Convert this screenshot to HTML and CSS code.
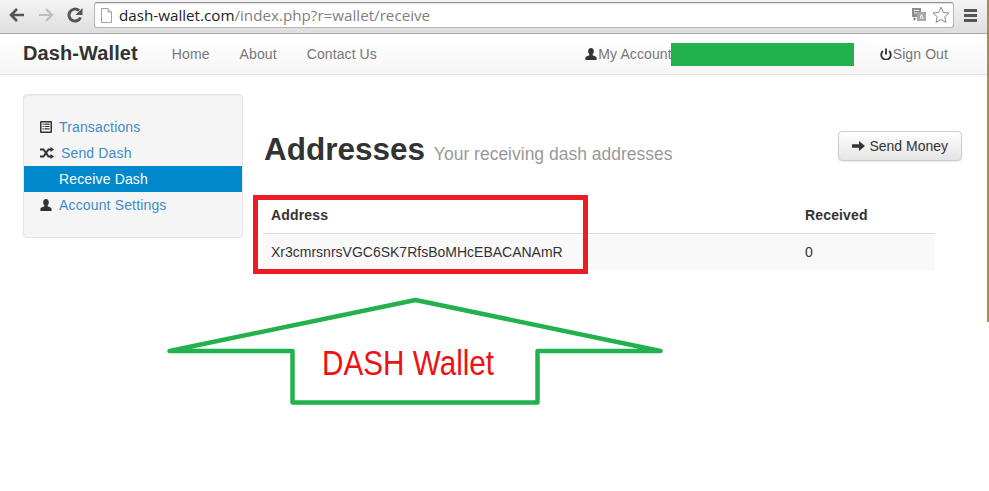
FILE: index.html
```html
<!DOCTYPE html>
<html lang="en">
<head>
<meta charset="utf-8">
<title>Dash-Wallet</title>
<link rel="stylesheet" href="styles.css">
</head>
<body>
<div class="toolbar">
  <svg class="tb-icon back" viewBox="0 0 16 14"><path d="M8 1 2 7l6 6M2.5 7H15" fill="none" stroke="currentColor" stroke-width="2.6"/></svg>
  <svg class="tb-icon fwd" viewBox="0 0 16 14"><path d="M8 1l6 6-6 6M13.5 7H1" fill="none" stroke="currentColor" stroke-width="2.2"/></svg>
  <svg class="tb-icon reload" viewBox="0 0 16 16"><path d="M13.500 10.500A6 6 0 1 1 12 3.600" fill="none" stroke="currentColor" stroke-width="3"/><path d="M15.500 1v7h-7z" fill="currentColor"/></svg>
  <div class="omnibox">
    <svg class="doc" viewBox="0 0 11 15"><path d="M.5.5h6.500l3.500 3.500v10.500h-10zM7 .5V4h3.500" fill="#fff" stroke="#a0a0a0"/></svg>
    <span class="url"><span class="host">dash-wallet.com</span>/index.php?r=wallet/receive</span>
    <svg class="translate" viewBox="0 0 14 14"><path d="M0 0h9v9H0z" fill="#8d8d8d"/><path d="M5 4h9v9H5z" fill="#a8a8a8"/><path d="M2 2.500h5M2 5h3M8 11l1.500-4.500L11 11" stroke="#fff" fill="none"/><path d="M1 11h3M2.500 9.500v3" stroke="#777"/></svg>
    <svg class="star" viewBox="0 0 18 18"><path d="M9 1.200l2.300 5.300 5.700.5-4.300 3.800 1.300 5.600L9 13.500l-5 2.900 1.300-5.600L1 7l5.700-.5z" fill="#fff" stroke="#8a8a8a" stroke-width="1"/></svg>
  </div>
  <div class="menu"><i></i><i></i><i></i></div>
</div>

<nav class="navbar">
  <a class="brand">Dash-Wallet</a>
  <ul class="nav">
    <li><a>Home</a></li>
    <li><a>About</a></li>
    <li><a>Contact Us</a></li>
  </ul>
  <ul class="nav nav-right">
    <li><a class="account"><svg class="gly" viewBox="0 0 14 14"><path d="M7 0c2.200 0 3.300 1.600 3.300 3.700 0 1.500-.6 2.900-1.400 3.700v1.100c1.800.7 4 1.300 4.600 2.500V14H.5v-3c.6-1.200 2.800-1.800 4.600-2.500V7.400C4.300 6.600 3.700 5.200 3.700 3.700 3.700 1.600 4.800 0 7 0z" fill="currentColor"/></svg>My Account<span class="masked"></span></a></li>
    <li><a><svg class="gly" viewBox="0.800 0 12.400 13"><path d="M3.700 3.300a5.200 5.200 0 1 0 6.600 0M7 .5v6.500" fill="none" stroke="currentColor" stroke-width="2"/></svg>Sign Out</a></li>
  </ul>
</nav>

<main class="main">
  <aside class="sidebar">
    <a class="side-item"><svg class="side-icon" viewBox="0 0 12 12"><path fill-rule="evenodd" d="M1 0h10a1 1 0 0 1 1 1v10a1 1 0 0 1-1 1H1a1 1 0 0 1-1-1V1a1 1 0 0 1 1-1zm.5 1.500v9h9v-9zM2.500 2.500h1.200v1.200H2.500zm2 0h5v1.200h-5zm-2 2.400h1.200v1.200H2.500zm2 0h5v1.200h-5zm-2 2.400h1.200v1.200H2.500zm2 0h5v1.200h-5z"/></svg><span>Transactions</span></a>
    <a class="side-item send"><svg class="side-icon shuffle" viewBox="0 0 14 12"><path d="M0 2.500h3.500l5 7H11M0 9.500h3.500l5-7H11" fill="none" stroke="currentColor" stroke-width="2"/><path d="M10.500 0 14 2.500 10.500 5zM10.500 7 14 9.500 10.500 12z"/></svg><span>Send Dash</span></a>
    <a class="side-item active"><span class="no-icon"></span><span>Receive Dash</span></a>
    <a class="side-item"><svg class="side-icon" viewBox="0 0 14 14"><path d="M7 0c2.200 0 3.300 1.600 3.300 3.700 0 1.500-.6 2.900-1.400 3.700v1.100c1.800.7 4 1.300 4.600 2.500V14H.5v-3c.6-1.200 2.800-1.800 4.600-2.500V7.400C4.300 6.600 3.700 5.200 3.700 3.700 3.700 1.600 4.800 0 7 0z"/></svg><span>Account Settings</span></a>
  </aside>

  <section class="content">
    <header class="page-head">
      <h1>Addresses <small>Your receiving dash addresses</small></h1>
      <a class="btn"><svg class="btn-icon" viewBox="0 0 13 10"><path d="M0 3.300h7V0l6 5-6 5V6.700H0z"/></svg>Send Money</a>
    </header>
    <table class="table">
      <thead>
        <tr><th class="col-address">Address</th><th>Received</th></tr>
      </thead>
      <tbody>
        <tr><td>Xr3cmrsnrsVGC6SK7RfsBoMHcEBACANAmR</td><td>0</td></tr>
      </tbody>
    </table>
  </section>
</main>

<div class="window-edge"></div>
<svg class="annotation" viewBox="0 0 989 491">
  <rect x="255.500" y="197.500" width="330" height="74" fill="none" stroke="#ed1c24" stroke-width="5"/>
  <path d="M169.500 351 415.500 300 660.500 351H537.500V402.500H292.500V351Z" fill="none" stroke="#22b14c" stroke-width="4.500" stroke-linejoin="round"/>
</svg>
<div class="annotation-label">DASH Wallet</div>
</body>
</html>
```
FILE: styles.css
```css
* { box-sizing: border-box; }
html, body { margin: 0; padding: 0; }
body {
  position: relative;
  width: 989px;
  height: 491px;
  overflow: hidden;
  background: #fff;
  color: #333;
  font-family: "Liberation Sans", Arial, sans-serif;
  font-size: 14px;
  line-height: 20px;
}

/* browser toolbar */
.toolbar {
  display: flex;
  align-items: center;
  width: 987px;
  height: 34px;
  padding: 0 0 3px 9px;
  background: linear-gradient(#f4f4f4, #dedede);
  border-bottom: 1px solid #a9a9a9;
}
.tb-icon { display: block; flex: none; }
.back { width: 16px; height: 14px; color: #555; }
.fwd { width: 16px; height: 14px; margin-left: 13px; color: #bdbdbd; }
.reload { width: 16px; height: 16px; margin-left: 13px; color: #555; }
.omnibox {
  display: flex;
  align-items: center;
  width: 860px;
  height: 26px;
  margin-left: 11px;
  padding: 0 3px 0 6px;
  background: #fff;
  border: 1px solid #b5b5b5;
  border-top-color: #8f8f8f;
  border-radius: 3px;
  box-shadow: inset 0 1px 1px rgba(0,0,0,.12);
}
.doc { width: 11px; height: 15px; flex: none; }
.url {
  margin-left: 7px;
  font-family: "Open Sans", "Noto Sans", sans-serif;
  font-size: 15.2px;
  color: #808080;
  white-space: nowrap;
}
.host { color: #222; }
.translate { width: 14px; height: 14px; margin-left: auto; }
.star { width: 18px; height: 18px; margin-left: 6px; }
.menu { display: flex; flex-direction: column; gap: 2px; margin-left: 10px; }
.menu i { display: block; width: 13px; height: 3px; background: #555; }

/* site navbar */
.navbar {
  display: flex;
  align-items: center;
  height: 41px;
  padding: 0 26px 0 23px;
  background: linear-gradient(#fff, #f6f6f6);
  border-bottom: 1px solid #e2e2e2;
  box-shadow: 0 1px 2px rgba(0,0,0,.04);
}
.brand { margin-bottom: 3px; font-size: 20px; font-weight: bold; color: #333; letter-spacing: .1px; }
.nav { display: flex; align-items: center; margin: 0 0 0 19px; padding: 0; list-style: none; letter-spacing: .1px; }
.nav li { display: flex; }
.nav a { display: flex; align-items: center; padding: 0 15px; color: #777; }
.nav-right { margin-left: auto; }
.gly { width: 12px; height: 12px; margin-right: 1px; color: #333; flex: none; }
.account { white-space: nowrap; }
.masked {
  display: inline-block;
  width: 183px;
  height: 23px;
  margin-left: -1px;
  margin-right: -4px;
  background: #22b14c;
}

/* main area */
.main { display: flex; align-items: flex-start; padding: 19px 27px 0 23px; }
.sidebar {
  flex: none;
  width: 220px;
  padding: 19px 0;
  background: #f5f5f5;
  border: 1px solid #e3e3e3;
  border-radius: 4px;
  box-shadow: inset 0 1px 1px rgba(0,0,0,.05);
  letter-spacing: .15px;
}
.side-item {
  display: flex;
  align-items: center;
  height: 26px;
  padding-left: 16px;
  color: #428bca;
}
.side-icon { width: 12px; height: 12px; flex: none; margin-right: 7px; color: #333; fill: #333; }
.shuffle { width: 14px; height: 12px; }
.send .side-icon { margin-right: 7px; }
.no-icon { width: 19px; flex: none; }
.active { background: #0088cc; color: #fff; }

.content { flex: 1; margin-left: 21px; min-width: 0; }
.page-head {
  display: flex;
  justify-content: space-between;
  align-items: flex-start;
  height: 103px;
  padding-top: 36px;
}
h1 {
  margin: 0;
  font-size: 31.5px;
  line-height: 38px;
  font-weight: bold;
  color: #333;
}
small { font-size: 17.5px; font-weight: normal; color: #999; }
.btn {
  display: flex;
  align-items: center;
  height: 30px;
  padding: 0 13px;
  margin-top: 1px;
  color: #333;
  background: linear-gradient(#fff, #e4e4e4);
  border: 1px solid #ccc;
  border-radius: 4px;
  box-shadow: 0 1px 1px rgba(0,0,0,.08);
}
.btn-icon { width: 13px; height: 10px; margin-right: 4px; fill: #333; }

.table { width: 672px; margin-left: -1px; border-collapse: collapse; border-spacing: 0; }
.col-address { width: 534px; }
th, td { padding: 8px; text-align: left; vertical-align: middle; }
th { height: 36px; font-weight: bold; border-bottom: 1px solid #ddd; letter-spacing: .15px; }
td { height: 36px; background: #f9f9f9; }

/* annotation layer drawn over the screenshot */
.window-edge {
  position: absolute;
  top: 0;
  right: 0;
  width: 2px;
  height: 322px;
  background: #a98a52;
}
.annotation {
  position: absolute;
  left: 0;
  top: 0;
  width: 989px;
  height: 491px;
  pointer-events: none;
}
.annotation-label {
  position: absolute;
  left: 322px;
  top: 346px;
  font-size: 29.7px;
  line-height: 34px;
  color: #ee1111;
  white-space: nowrap;
  transform: scaleY(1.175);
}
```
